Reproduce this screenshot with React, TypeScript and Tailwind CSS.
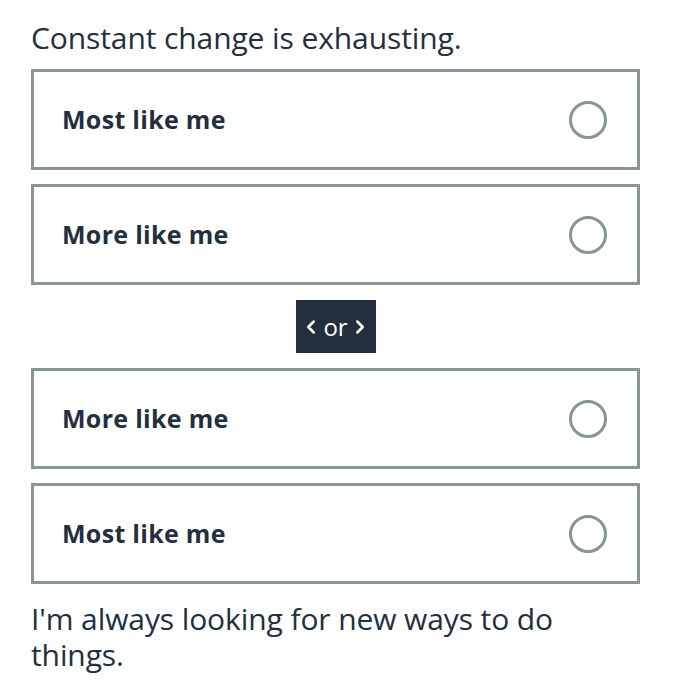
import { ChevronLeft, ChevronRight } from 'lucide-react';

const font = { fontFamily: '"Open Sans", Lato, sans-serif' };

function Choice({ label }: { label: string }) {
  return (
    <label className="flex h-[101px] items-center justify-between border-[3px] border-[#879596] bg-white pl-[28px] pr-[30px]">
      <span className="text-[25px] font-bold tracking-[0.3px] text-[#232f3e]">{label}</span>
      <span className="h-[38px] w-[38px] rounded-full border-[3px] border-[#879596]" />
    </label>
  );
}

export default function App() {
  return (
    <div className="min-h-screen bg-white px-[31px] pt-[18px] text-[#232f3e]" style={font}>
      <p className="text-[30px] leading-[40px] tracking-[-0.1px]">Constant change is exhausting.</p>
      <div className="mt-[11px] flex w-[609px] flex-col gap-[14px]">
        <Choice label="Most like me" />
        <Choice label="More like me" />
      </div>
      <div className="flex w-[609px] justify-center py-[15px]">
        <div className="flex h-[53px] w-[80px] items-center justify-center gap-[1px] bg-[#232f3e] text-white">
          <ChevronLeft className="h-[22px] w-[22px]" strokeWidth={2.75} />
          <span className="text-[24px] leading-none">or</span>
          <ChevronRight className="h-[22px] w-[22px]" strokeWidth={2.75} />
        </div>
      </div>
      <div className="flex w-[609px] flex-col gap-[14px]">
        <Choice label="More like me" />
        <Choice label="Most like me" />
      </div>
      <p className="mt-[17px] w-[560px] text-[30px] leading-[36px] tracking-[-0.1px]">I'm always looking for new ways to do things.</p>
    </div>
  );
}
